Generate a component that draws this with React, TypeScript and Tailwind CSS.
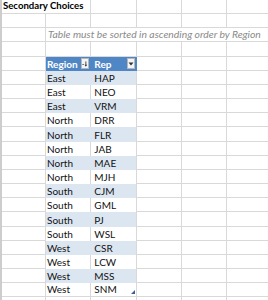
import React from "react";

const data: [string, string][] = [
  ["East", "HAP"],
  ["East", "NEO"],
  ["East", "VRM"],
  ["North", "DRR"],
  ["North", "FLR"],
  ["North", "JAB"],
  ["North", "MAE"],
  ["North", "MJH"],
  ["South", "CJM"],
  ["South", "GML"],
  ["South", "PJ"],
  ["South", "WSL"],
  ["West", "CSR"],
  ["West", "LCW"],
  ["West", "MSS"],
  ["West", "SNM"],
];

const cell = "border-r border-b border-[#d9d9d9] flex items-end overflow-visible whitespace-nowrap";

function Strip() {
  return <div className="bg-[#cdcdcd]" />;
}

function Empty() {
  return <div className={cell} />;
}

function FilterBtn({ sorted }: { sorted?: boolean }) {
  return (
    <div className="absolute right-[1px] top-[1.5px] w-[8px] h-[11px] bg-[#f4f4f4] border border-[#b7b7b7] flex items-center justify-center">
      {sorted ? (
        <svg width="7" height="8" viewBox="0 0 7 8">
          <rect x="0.5" y="4" width="1.5" height="1" fill="#333" />
          <path d="M4.5 1 V6.5" stroke="#333" strokeWidth="1" />
          <path d="M3 5 L4.5 7 L6 5 Z" fill="#333" />
        </svg>
      ) : (
        <svg width="6" height="4" viewBox="0 0 6 4">
          <path d="M0.5 0.5 L5.5 0.5 L3 3.5 Z" fill="#333" />
        </svg>
      )}
    </div>
  );
}

export default function App() {
  const font = { fontFamily: "Lato, 'Open Sans', sans-serif" };
  return (
    <div
      className="w-[268px] h-[300px] overflow-hidden bg-white text-[10px] text-[#111]"
      style={font}
    >
      <div className="grid grid-cols-[2px_44px_45.33px_45.33px_45.33px_45.33px_45.33px] auto-rows-[14.17px]">
        {/* Row 1 */}
        <Strip />
        <div className={`${cell} col-span-2 pl-[1px] pb-[1px] font-bold text-[9.6px] text-black leading-[12px]`}>
          Secondary Choices
        </div>
        <Empty />
        <Empty />
        <Empty />
        <Empty />
        {/* Row 2 */}
        <Strip />
        <Empty />
        <Empty />
        <Empty />
        <Empty />
        <Empty />
        <Empty />
        {/* Row 3 */}
        <Strip />
        <Empty />
        <div className={`${cell} col-span-5 pl-[2px] pb-[1px] italic text-[10.35px] text-[#8a8a8a] leading-[12px]`}>
          Table must be sorted in ascending order by Region
        </div>
        {/* Row 4 */}
        <Strip />
        <Empty />
        <Empty />
        <Empty />
        <Empty />
        <Empty />
        <Empty />
        {/* Header row */}
        <Strip />
        <Empty />
        <div className="relative bg-[#4f86c6] flex items-end pl-[1px] pb-[1px] leading-[12px] font-bold text-white border-r border-[#4f86c6]">
          Region
          <FilterBtn sorted />
        </div>
        <div className="relative bg-[#4f86c6] flex items-end pl-[3px] pb-[1px] leading-[12px] font-bold text-white border-r border-[#4f86c6]">
          Rep
          <FilterBtn />
        </div>
        <Empty />
        <Empty />
        <Empty />
        {data.map(([r, p], i) => {
          const blue = i % 2 === 0;
          const last = i === data.length - 1;
          return (
            <React.Fragment key={i}>
              <Strip />
              <Empty />
              <div
                className={
                  blue
                    ? "bg-[#dce6f1] flex items-end pl-[1px] pb-[1px] leading-[12px] border-r border-[#dce6f1]"
                    : `flex items-end pl-[1px] pb-[1px] leading-[12px] border-r border-[#d9d9d9] ${last ? "border-b" : ""}`
                }
              >
                {r}
              </div>
              <div
                className={
                  blue
                    ? "bg-[#dce6f1] flex items-end pl-[3px] pb-[1px] leading-[12px] border-r border-[#d9d9d9]"
                    : `relative flex items-end pl-[3px] pb-[1px] leading-[12px] border-r border-[#d9d9d9] ${last ? "border-b" : ""}`
                }
              >
                {p}
                {last && (
                  <svg
                    className="absolute right-[1px] bottom-[2px]"
                    width="4"
                    height="4"
                    viewBox="0 0 4 4"
                  >
                    <path d="M4 0 L4 4 L0 4 Z" fill="#3a5f8f" />
                  </svg>
                )}
              </div>
              <Empty />
              <Empty />
              <Empty />
            </React.Fragment>
          );
        })}
        {/* trailing row */}
        <Strip />
        <Empty />
        <Empty />
        <Empty />
        <Empty />
        <Empty />
        <Empty />
      </div>
    </div>
  );
}
